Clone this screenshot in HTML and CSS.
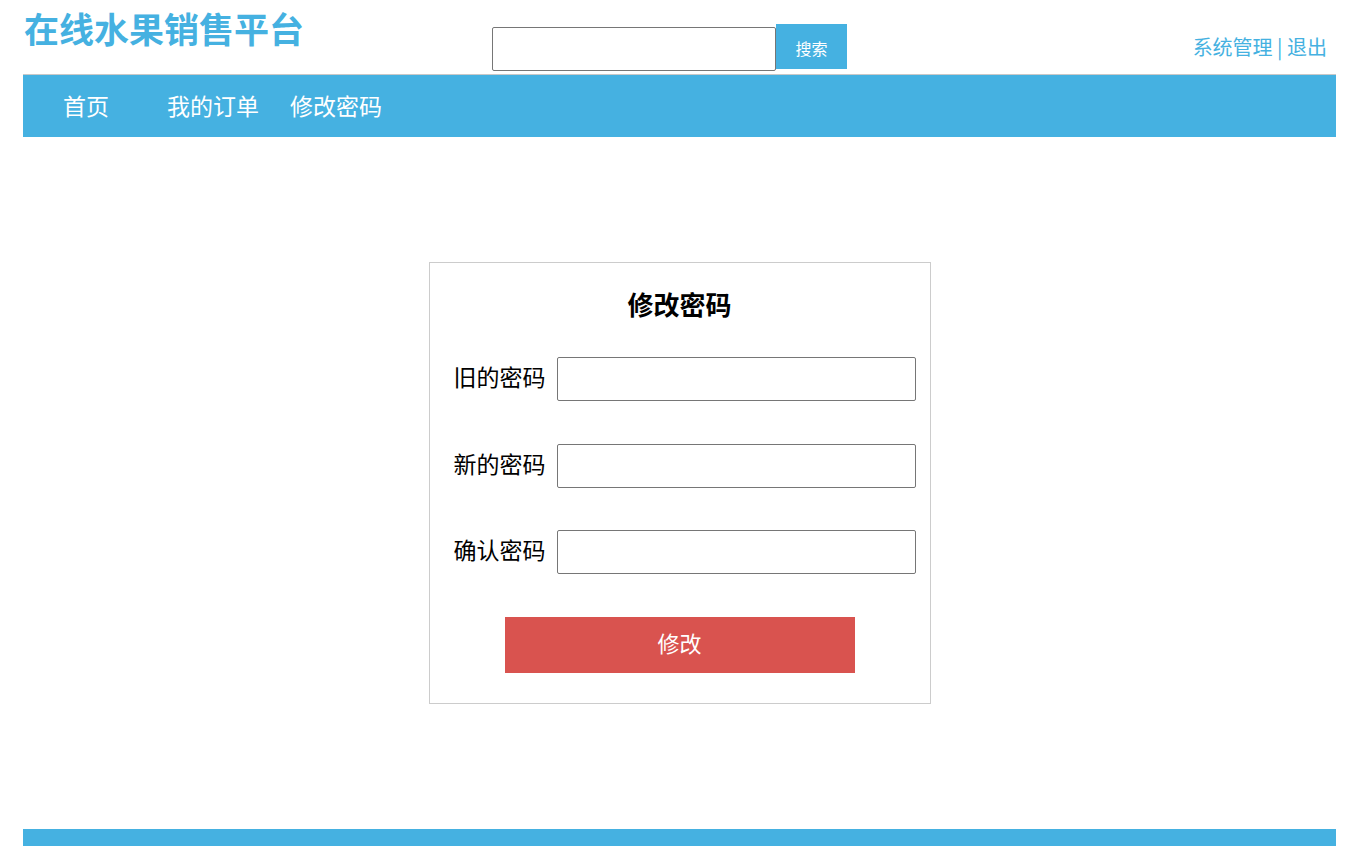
FILE: index.html
```html
<!DOCTYPE html>
<html lang="zh-CN">
<head>
<meta charset="utf-8">
<title>修改密码 - 在线水果销售平台</title>
<link rel="stylesheet" href="styles.css">
</head>
<body>
<div class="wrap">
  <header class="header">
    <div class="logo">在线水果销售平台</div>
    <form class="search">
      <input class="search-input" type="text">
      <button class="search-btn" type="button">搜索</button>
    </form>
    <div class="user-links"><a href="#">系统管理</a> | <a href="#">退出</a></div>
  </header>
  <nav class="nav">
    <a class="nav-item nav-home" href="#">首页</a>
    <a class="nav-item" href="#">我的订单</a>
    <a class="nav-item" href="#">修改密码</a>
  </nav>
  <main class="main">
    <div class="panel">
      <h2 class="panel-title">修改密码</h2>
      <div class="row"><label class="row-label">旧的密码</label><input class="row-input" type="password"></div>
      <div class="row"><label class="row-label">新的密码</label><input class="row-input" type="password"></div>
      <div class="row"><label class="row-label">确认密码</label><input class="row-input" type="password"></div>
      <div class="actions"><button class="submit" type="button">修改</button></div>
    </div>
  </main>
  <footer class="footer"></footer>
</div>
</body>
</html>
```
FILE: styles.css
```css
* { box-sizing: border-box; }
html, body { margin: 0; padding: 0; background: #fff; }
body {
  font-family: "Noto Sans CJK SC", "Noto Sans", "Liberation Sans", sans-serif;
  color: #000;
  overflow: hidden;
}
.wrap {
  width: 1313px;
  margin-left: 23px;
}
.header {
  display: flex;
  align-items: flex-start;
  height: 74px;
}
.logo {
  width: 469px;
  padding-left: 1px;
  margin-top: 5px;
  font-size: 35px;
  line-height: 45px;
  font-weight: bold;
  color: #45b1e1;
}
.search {
  display: flex;
  align-items: flex-start;
  margin: 0;
}
.search-input {
  margin-top: 27px;
  width: 284px;
  height: 44px;
  border: 1px solid #767676;
  border-radius: 2px;
  padding: 0 6px;
  font-size: 16px;
  background: #fff;
}
.search-btn {
  margin-top: 24px;
  width: 71px;
  height: 45px;
  border: none;
  background: #45b1e1;
  color: #fff;
  font-family: inherit;
  font-size: 16px;
  padding: 3px 0 0;
}
.user-links {
  margin-left: auto;
  margin-right: 9px;
  margin-top: 33px;
  font-size: 20px;
  line-height: 28px;
  color: #45b1e1;
}
.user-links a { color: #45b1e1; text-decoration: none; }
.nav {
  display: flex;
  align-items: center;
  height: 63px;
  border-top: 1px solid #c8c8c8;
  background: #45b1e1;
  padding-left: 40px;
  gap: 31px;
}
.nav-item {
  color: #fff;
  text-decoration: none;
  font-size: 23px;
  line-height: 61px;
  padding-bottom: 1px;
}
.nav-home { margin-right: 27px; }
.main {
  padding: 125px 0;
}
.panel {
  width: 502px;
  margin: 0 auto;
  border: 1px solid #cccccc;
  padding: 24px 14px 30px 24px;
}
.panel-title {
  margin: 0 0 34px -10px;
  text-align: center;
  font-size: 26px;
  line-height: 34px;
  padding-bottom: 2px;
  font-weight: bold;
}
.row {
  display: flex;
  align-items: center;
  height: 44px;
  margin-bottom: 42.5px;
}
.row-label {
  width: 90px;
  margin-right: 13px;
  font-size: 23px;
  line-height: 30px;
  padding-bottom: 6px;
  text-align: right;
  white-space: nowrap;
}
.row-input {
  width: 359px;
  height: 44px;
  border: 1px solid #767676;
  border-radius: 2px;
  padding: 0 6px;
  font-size: 16px;
  background: #fff;
}
.actions {
  display: flex;
  justify-content: center;
  margin-left: -10px;
}
.submit {
  width: 350px;
  height: 56px;
  border: none;
  background: #d9534f;
  color: #fff;
  font-family: inherit;
  font-size: 22px;
  padding: 0 0 6px;
}
.footer {
  height: 40px;
  background: #45b1e1;
}
```
